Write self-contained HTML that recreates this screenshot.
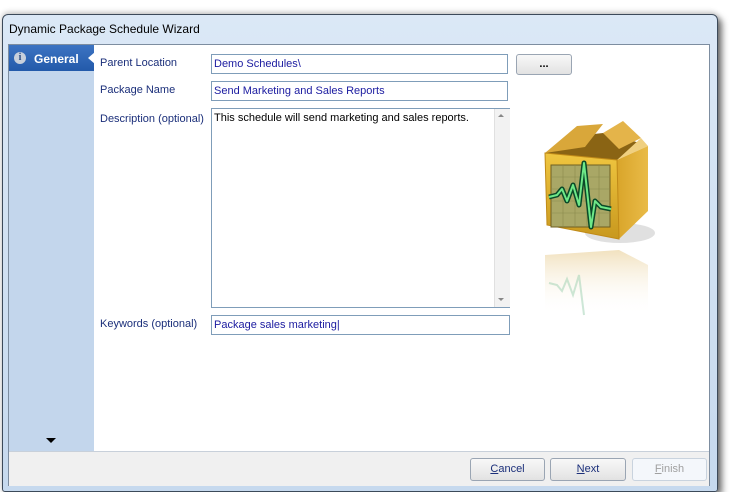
<!DOCTYPE html>
<html><head><style>
body{margin:0;width:731px;height:492px;background:#fff;position:relative;overflow:hidden;font-family:"Liberation Sans",sans-serif;font-size:11px}
.a{position:absolute}
.win{left:2px;top:14px;width:714px;height:476px;background:linear-gradient(#dbe8f6,#c6d9ee);border:1px solid #3c4a5a;border-radius:6px 6px 3px 3px;box-shadow:4px 4px 7px rgba(0,0,0,.55),0 -2px 6px rgba(0,0,0,.2)}
.cl{left:8px;top:44px;width:700px;height:440px;background:#fff;border:1px solid #7d8da0}
.lbl{color:#1b2f7a;font-size:11px}
.box{border:1px solid #7f9db9;background:#fff;color:#1b1ba0;padding:3px 2px;box-sizing:border-box;height:20px;font-size:11px}
.btn{border:1px solid #9aa5b3;border-radius:3px;background:linear-gradient(#f8f8f8,#e2e2e2);text-align:center;line-height:21px;height:23px;color:#1b2f7a;box-sizing:border-box}
</style></head><body>
<div class="a win"></div>
<div class="a" style="left:9px;top:22px;font-size:12px;color:#000">Dynamic Package Schedule Wizard</div>
<div class="a cl"></div>
<div class="a" style="left:9px;top:45px;width:85px;height:406px;background:#c3d6ec"></div>
<div class="a" style="left:9px;top:45px;width:85px;height:26px;background:linear-gradient(#3d74c2,#235aaa)"></div>
<div class="a" style="left:88px;top:52px;width:0;height:0;border-top:6px solid transparent;border-bottom:6px solid transparent;border-right:7px solid #fff"></div>
<div class="a" style="left:14px;top:52px;width:12px;height:12px;border-radius:50%;background:#c8d0dc;color:#2d4f86;font-weight:bold;font-size:10px;text-align:center;line-height:12px;font-family:'Liberation Serif',serif">i</div>
<div class="a" style="left:34px;top:52px;color:#fff;font-weight:bold;font-size:12px">General</div>
<div class="a" style="left:46px;top:438px;border-left:5px solid transparent;border-right:5px solid transparent;border-top:5px solid #000"></div>
<div class="a" style="left:9px;top:451px;width:700px;height:34px;background:#f0f0f0;border-top:1px solid #c8d0da"></div>
<div class="a lbl" style="left:100px;top:57px">Parent Location</div>
<div class="a lbl" style="left:100px;top:84px">Package Name</div>
<div class="a lbl" style="left:100px;top:113px">Description (optional)</div>
<div class="a lbl" style="left:100px;top:318px">Keywords (optional)</div>
<div class="a box" style="left:211px;top:54px;width:297px">Demo Schedules\</div>
<div class="a box" style="left:211px;top:81px;width:297px">Send Marketing and Sales Reports</div>
<div class="a box" style="left:211px;top:108px;width:299px;height:200px;color:#000">This schedule will send marketing and sales reports.</div>
<div class="a" style="left:494px;top:109px;width:15px;height:198px;background:#f2f2f2;border-left:1px solid #e0e0e0"></div>
<div class="a" style="left:498px;top:114px;border-left:3px solid transparent;border-right:3px solid transparent;border-bottom:3px solid #888"></div>
<div class="a" style="left:498px;top:298px;border-left:3px solid transparent;border-right:3px solid transparent;border-top:3px solid #888"></div>
<div class="a box" style="left:211px;top:315px;width:299px;height:20px">Package sales marketing|</div>
<div class="a btn" style="left:516px;top:54px;width:56px;color:#000;font-weight:bold;line-height:18px;height:21px">...</div>
<svg class="a" style="left:535px;top:115px" width="130" height="210" viewBox="0 0 130 210">
<defs><linearGradient id="g" x1="0" y1="0" x2="0" y2="1"><stop offset="0" stop-color="#f0c640"/><stop offset="1" stop-color="#c8981e"/></linearGradient>
<linearGradient id="s" x1="0" y1="0" x2="1" y2="0"><stop offset="0" stop-color="#d9a52a"/><stop offset="1" stop-color="#e9bb48"/></linearGradient>
<linearGradient id="r" x1="0" y1="0" x2="0" y2="1"><stop offset="0" stop-color="#e6c98a" stop-opacity=".55"/><stop offset="1" stop-color="#fff" stop-opacity="0"/></linearGradient></defs>
<ellipse cx="85" cy="118" rx="35" ry="10" fill="#000" opacity=".12"/>
<polygon points="10,38 32,22 68,18 105,28 82,45" fill="#8a6414"/>
<polygon points="10,38 42,11 68,9 50,32" fill="#d9a73a"/>
<polygon points="68,18 88,6 106,23 84,34" fill="#e4b44a"/>
<polygon points="82,45 106,23 113,31" fill="#f0d080"/>
<polygon points="10,38 82,45 82,98" fill="none"/>
<polygon points="82,45 113,31 113,96 84,124" fill="url(#s)"/>
<polygon points="10,38 82,45 84,124 12,110" fill="url(#g)" stroke="#c08a18"/>
<rect x="16" y="50" width="59" height="62" fill="#a9a766" stroke="#6e5f22"/>
<g stroke="#8a8a4c" stroke-width=".6">
<line x1="16" y1="62" x2="75" y2="62"/><line x1="16" y1="74" x2="75" y2="74"/><line x1="16" y1="86" x2="75" y2="86"/><line x1="16" y1="98" x2="75" y2="98"/>
<line x1="28" y1="50" x2="28" y2="112"/><line x1="40" y1="50" x2="40" y2="112"/><line x1="52" y1="50" x2="52" y2="112"/><line x1="64" y1="50" x2="64" y2="112"/></g>
<polyline points="14,82 22,80 27,74 32,86 38,70 44,90 49,48 56,112 60,86 66,92 76,94" fill="none" stroke="#0a4a28" stroke-width="5" stroke-linejoin="round"/>
<polyline points="14,82 22,80 27,74 32,86 38,70 44,90 49,48 56,112 60,86 66,92 76,94" fill="none" stroke="#6ee888" stroke-width="2" stroke-linejoin="round"/>
<polygon points="10,140 84,135 113,150 113,200 10,200" fill="url(#r)"/>
<polyline points="14,168 22,170 27,176 32,164 38,180 44,160 49,200" fill="none" stroke="#9ccfb0" stroke-width="2" opacity=".5"/>
</svg>
<div class="a btn" style="left:470px;top:458px;width:75px"><u>C</u>ancel</div>
<div class="a btn" style="left:550px;top:458px;width:76px"><u>N</u>ext</div>
<div class="a btn" style="left:632px;top:458px;width:75px;background:#f4f7fb;border-color:#c9d3de;color:#a0a0a0"><u>F</u>inish</div>
</body></html>
